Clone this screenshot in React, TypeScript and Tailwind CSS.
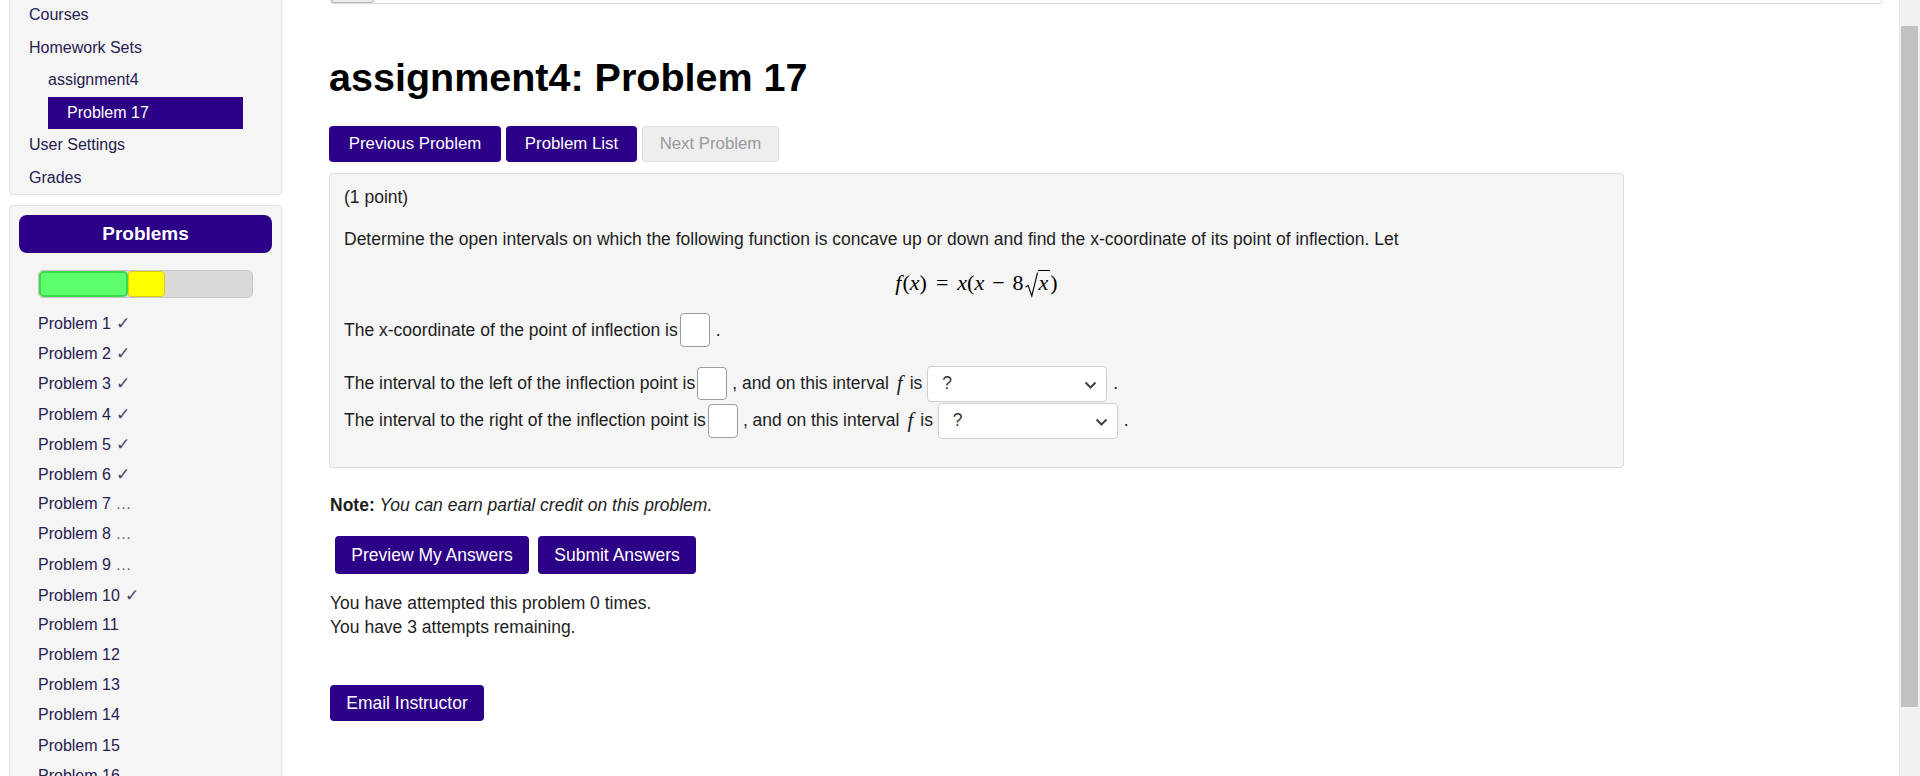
import React from 'react';

const NAV = [
  { label: 'Courses', depth: 0 },
  { label: 'Homework Sets', depth: 0 },
  { label: 'assignment4', depth: 1 },
  { label: 'Problem 17', depth: 2 },
  { label: 'User Settings', depth: 0 },
  { label: 'Grades', depth: 0 },
];

const PROBLEMS: [number, string][] = [
  [1, '✓'], [2, '✓'], [3, '✓'], [4, '✓'], [5, '✓'], [6, '✓'],
  [7, '…'], [8, '…'], [9, '…'], [10, '✓'],
  [11, ''], [12, ''], [13, ''], [14, ''], [15, ''], [16, ''],
];

function Radical() {
  return (
    <span className="ml-[1px] inline-flex items-end">
      <svg width="13" height="26" viewBox="0 0 13 26" className="-mb-[4px]">
        <path d="M0.5 15 L3.2 13.5 L6.8 24 L12.4 1 L13 1" fill="none" stroke="#000" strokeWidth="1.1" />
      </svg>
      <span className="border-t border-black pl-[1px] pr-[2px] leading-[23px] italic">x</span>
    </span>
  );
}

function MathF() {
  return <span className="ml-[8px] mr-[7px] font-['Liberation_Serif',serif] text-[21px] italic">f</span>;
}

function AnswerBox({ h }: { h: string }) {
  return <span className={`ml-[2px] inline-block w-[30px] ${h} rounded-[4px] border border-[#9c9c9c] bg-white`} />;
}

function Dropdown() {
  return (
    <span className="relative inline-flex h-[36px] w-[180px] items-center rounded-[4px] border border-[#cfcfcf] bg-white pl-[14px] text-[#333]">
      ?
      <svg className="absolute right-[9px] top-[14px]" width="13" height="8" viewBox="0 0 13 8">
        <path d="M1.5 1.5 L6.5 6.5 L11.5 1.5" fill="none" stroke="#444" strokeWidth="2" />
      </svg>
    </span>
  );
}

export default function App() {
  return (
    <div className="flex h-[776px] overflow-hidden bg-white font-['Liberation_Sans',Arial,sans-serif]">
      {/* Sidebar */}
      <aside className="w-[329px] shrink-0 pl-[9px]">
        <div className="-mt-[1px] w-[273px] rounded-b-[4px] border border-t-0 border-[#e3e3e3] bg-[#f5f5f5] text-[16px] text-[#26204f]">
          {NAV.map((item) =>
            item.depth === 2 ? (
              <div key={item.label} className="h-[32.5px] pt-[0.5px]">
                <div className="ml-[38px] h-[32px] w-[195px] bg-[#2c0087] pl-[19px] leading-[32px] text-white">
                  {item.label}
                </div>
              </div>
            ) : (
              <div
                key={item.label}
                className={`h-[32.5px] leading-[32.5px] ${item.depth === 1 ? 'pl-[38px]' : 'pl-[19px]'}`}
              >
                {item.label}
              </div>
            )
          )}
        </div>

        <div className="mt-[10px] w-[273px] rounded-[4px] border border-[#e3e3e3] bg-[#f5f5f5] px-[9px] pt-[9px] pb-[20px]">
          <div className="flex h-[38px] items-center justify-center rounded-[8px] bg-[#2c0087] text-[19px] font-bold text-white">
            Problems
          </div>
          <div className="ml-[19px] mt-[17px] flex h-[28px] w-[215px] rounded-[5px] border border-[#c6c6c6] bg-[#dadada]">
            <div className="h-full w-[89px] rounded-[5px] border-2 border-[#3fd948] bg-[#5dff6c]" />
            <div className="h-full w-[37px] rounded-[4px] border border-[#e3cf00] bg-[#ffff00]" />
          </div>
          <div className="mt-[10px] pl-[19px] text-[16px] text-[#26204f]">
            {PROBLEMS.map(([n, mark]) => (
              <div key={n} className="h-[30.2px] leading-[30.2px]">
                Problem {n}
                {mark === '✓' && (
                  <span className="font-['DejaVu_Sans',sans-serif] text-[17px] font-light text-[#4a456e]"> ✓</span>
                )}
                {mark === '…' && <span className="text-[#6b6785]"> …</span>}
              </div>
            ))}
          </div>
        </div>
      </aside>

      {/* Main */}
      <main className="min-w-0 flex-1 pr-[16px] text-[17.5px] text-[#1d1d1d]">
        <div className="ml-[1px] flex h-[4px] rounded-b-[4px] border border-t-0 border-[#dcdcdc]">
          <div className="h-full w-[43px] rounded-b-[4px] border-x border-b border-[#b9b9b9] bg-[#ececec]" />
        </div>

        <h1 className="mt-[50px] text-[39.5px] font-bold leading-[47px] text-black">assignment4: Problem 17</h1>

        <div className="mt-[25px] flex gap-[5px] text-[16.8px]">
          <button className="h-[36px] w-[172px] rounded-[4px] bg-[#2c0087] text-white">Previous Problem</button>
          <button className="h-[36px] w-[131px] rounded-[4px] bg-[#2c0087] text-white">Problem List</button>
          <button className="h-[36px] w-[137px] rounded-[4px] border border-[#dedede] bg-[#eeeeee] text-[#9a9a9a]">
            Next Problem
          </button>
        </div>

        <div className="mt-[11px] w-[1295px] rounded-[4px] border border-[#dcdcdc] bg-[#f5f5f5] px-[14px] pt-[11px] pb-[28px]">
          <div className="leading-[24px]">(1 point)</div>
          <div className="mt-[18px] leading-[24px]">
            Determine the open intervals on which the following function is concave up or down and find the
            x-coordinate of its point of inflection. Let
          </div>
          <div className="mt-[16px] flex h-[30px] items-center justify-center font-['Liberation_Serif',serif] text-[22px] text-black">
            <span className="italic">f</span>
            <span className="ml-[1px]">(</span>
            <span className="italic">x</span>
            <span>)</span>
            <span className="mx-[9px]">=</span>
            <span className="italic">x</span>
            <span>(</span>
            <span className="italic">x</span>
            <span className="mx-[8px]">−</span>
            <span>8</span>
            <Radical />
            <span>)</span>
          </div>
          <div className="mt-[16px] flex h-[34px] items-center">
            The x-coordinate of the point of inflection is
            <AnswerBox h="h-[34px]" />
            <span className="ml-[6px]">.</span>
          </div>
          <div className="mt-[18px] flex h-[37px] items-center whitespace-pre">
            The interval to the left of the inflection point is
            <AnswerBox h="h-[33px]" />
            <span className="ml-[5px]">, and on this interval</span>
            <MathF />
            {'is '}
            <Dropdown />
            <span className="ml-[6px]">.</span>
          </div>
          <div className="flex h-[37px] items-center whitespace-pre">
            The interval to the right of the inflection point is
            <AnswerBox h="h-[34px]" />
            <span className="ml-[5px]">, and on this interval</span>
            <MathF />
            {'is '}
            <Dropdown />
            <span className="ml-[6px]">.</span>
          </div>
        </div>

        <p className="mt-[25px] pl-[1px] leading-[24px]">
          <b>Note:</b> <i>You can earn partial credit on this problem.</i>
        </p>

        <div className="ml-[6px] mt-[19px] flex gap-[9px]">
          <button className="h-[38px] w-[194px] rounded-[4px] bg-[#2c0087] text-white">Preview My Answers</button>
          <button className="h-[38px] w-[158px] rounded-[4px] bg-[#2c0087] text-white">Submit Answers</button>
        </div>

        <div className="mt-[17px] pl-[1px] leading-[24px]">
          <div>You have attempted this problem 0 times.</div>
          <div>You have 3 attempts remaining.</div>
        </div>

        <button className="ml-[1px] mt-[46px] h-[36px] w-[154px] rounded-[4px] bg-[#2c0087] text-white">
          Email Instructor
        </button>
      </main>

      {/* Window scrollbar */}
      <div className="w-[21px] shrink-0 border-l border-[#e6e6e6] bg-[#f1f1f1] pl-[1px] pt-[26px]">
        <div className="h-[681px] w-[17px] bg-[#c1c1c1]" />
      </div>
    </div>
  );
}
